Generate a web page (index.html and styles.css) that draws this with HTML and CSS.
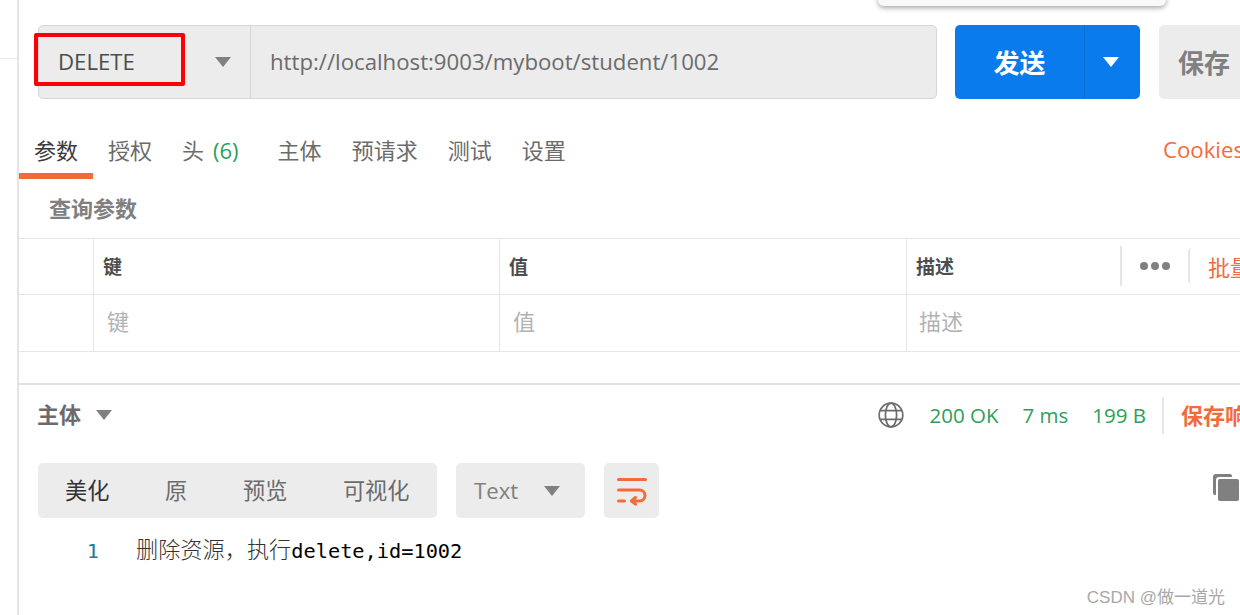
FILE: index.html
```html
<!DOCTYPE html>
<html lang="zh-CN">
<head>
<meta charset="utf-8">
<title>Postman</title>
<link rel="stylesheet" href="styles.css">
</head>
<body>
<aside class="rail"><div class="rail-line"></div></aside>
<main class="main">
  <div class="toast"></div>
  <div class="highlight"></div>
  <section class="request-bar">
    <div class="url-box">
      <div class="method"><span class="method-name">DELETE</span><span class="caret caret-grey"></span></div>
      <div class="url">http://localhost:9003/myboot/student/1002</div>
    </div>
    <div class="send">
      <span class="send-label">发送</span>
      <span class="send-more"><span class="caret caret-white"></span></span>
    </div>
    <div class="save">保存</div>
  </section>
  <nav class="tabs">
    <span class="tab tab-active">参数</span>
    <span class="tab">授权</span>
    <span class="tab tab-headers">头<span class="count">(6)</span></span>
    <span class="tab">主体</span>
    <span class="tab">预请求</span>
    <span class="tab">测试</span>
    <span class="tab">设置</span>
    <span class="spacer"></span>
    <span class="cookies">Cookies</span>
  </nav>
  <h2 class="section-title">查询参数</h2>
  <section class="table">
    <div class="row row-head">
      <div class="cell"></div>
      <div class="cell">键</div>
      <div class="cell">值</div>
      <div class="cell cell-actions">
        <span class="desc-head">描述</span>
        <span class="action-line"></span>
        <span class="dots"><i></i><i></i><i></i></span>
        <span class="bulk-line"></span>
        <span class="bulk">批量</span>
      </div>
    </div>
    <div class="row row-body">
      <div class="cell"></div>
      <div class="cell">键</div>
      <div class="cell">值</div>
      <div class="cell cell-last">描述</div>
    </div>
  </section>
  <section class="response">
    <div class="response-head">
      <span class="response-title">主体</span>
      <span class="caret caret-title"></span>
      <span class="spacer"></span>
      <svg class="globe" viewBox="0 0 26 26" fill="none" stroke="#6b6b6b" stroke-width="1.7">
        <circle cx="13" cy="13" r="11.8"/>
        <ellipse cx="13" cy="13" rx="5.6" ry="11.8"/>
        <path d="M2.6 8.6h20.8M2.6 17.4h20.8"/>
      </svg>
      <span class="stat stat-status">200 OK</span>
      <span class="stat stat-time">7 ms</span>
      <span class="stat stat-size">199 B</span>
      <span class="head-line"></span>
      <span class="save-response">保存响应</span>
    </div>
    <div class="toolbar">
      <div class="segments">
        <span class="segment seg-a seg-on">美化</span>
        <span class="segment seg-b">原</span>
        <span class="segment seg-c">预览</span>
        <span class="segment seg-d">可视化</span>
      </div>
      <div class="format"><span class="format-label">Text</span><span class="caret caret-format"></span></div>
      <div class="wrap">
        <svg viewBox="0 0 30 30" width="30" height="30" fill="none" stroke="#f26b3a" stroke-width="3" stroke-linecap="round" stroke-linejoin="round">
          <path d="M1.5 3.5h27"/>
          <path d="M1.5 14h21a5.5 5.5 0 0 1 0 11H15"/>
          <path d="M18.5 21.5 14.5 25l4 3.2"/>
          <path d="M1.5 25h6"/>
        </svg>
      </div>
      <span class="spacer"></span>
      <svg class="copy" viewBox="0 0 26 28" fill="#808080">
        <path d="M3 1h14a2 2 0 0 1 2 2v1H6a3 3 0 0 0-3 3v15H2a2 2 0 0 1-2-2V4a3 3 0 0 1 3-3z"/>
        <rect x="5" y="6" width="21" height="22" rx="2"/>
      </svg>
    </div>
    <div class="code">
      <span class="line-no">1</span>
      <span class="code-text"><span class="code-cjk">删除资源，执行</span>delete,id=1002</span>
    </div>
  </section>
  <div class="watermark">CSDN @做一道光</div>
</main>
</body>
</html>
```
FILE: styles.css
```css
* { box-sizing: border-box; }
html, body { margin: 0; height: 100%; overflow: hidden; background: #fff; }
body {
  display: flex;
  font-family: "Open Sans", "Noto Sans CJK SC", sans-serif;
  color: #6b6b6b;
}
.rail { flex: none; width: 19px; border-right: 2px solid #e4e4e4; padding-top: 58px; }
.rail-line { height: 1px; background: #e8e8e8; }
.main { position: relative; flex: 1; min-width: 0; overflow: hidden; padding-top: 25px; }
.spacer { flex: 1; }

.toast {
  position: absolute; left: 859px; top: -20px; width: 288px; height: 26px;
  background: #f9f9f9; border-radius: 6px; box-shadow: 0 2px 5px rgba(0,0,0,.35);
}
.highlight {
  position: absolute; left: 15px; top: 33px; width: 151px; height: 53px;
  border: 4px solid #fb0007; border-radius: 2px; z-index: 2;
}

.caret { flex: none; width: 0; height: 0; border-left: 8px solid transparent; border-right: 8px solid transparent; border-top: 10px solid #808080; }
.caret-white { border-top-color: #fff; }

.request-bar { display: flex; height: 74px; padding-left: 19px; }
.url-box { flex: none; display: flex; width: 899px; background: #ececec; border: 1px solid #d6d6d6; border-radius: 5px; }
.method { flex: none; display: flex; align-items: center; width: 212px; padding-left: 19px; border-right: 1px solid #d6d6d6; }
.method-name { width: 157px; margin-bottom: 1px; font-size: 22.2px; color: #4d4d4d; }
.url { display: flex; align-items: center; padding: 0 0 2px 19px; font-size: 22.2px; color: #6b6b6b; }
.send { flex: none; display: flex; width: 185px; margin-left: 18px; background: #097bed; border-radius: 5px; color: #fff; }
.send-label { display: flex; align-items: center; justify-content: center; width: 129px; font-size: 26px; font-weight: 700; }
.send-more { display: flex; align-items: center; justify-content: center; flex: 1; padding-right: 4px; border-left: 1px solid #0a6fd4; }
.save {
  flex: none; display: flex; align-items: center; width: 100px; margin-left: 19px; padding-left: 19px;
  background: #ececec; border-radius: 5px; font-size: 26px; font-weight: 700; color: #808080;
}

.tabs { display: flex; height: 80px; align-items: flex-end; }
.tab { flex: none; height: 44px; padding: 0 15px; font-size: 22px; line-height: 30px; color: #6b6b6b; }
.tab-active { color: #3b3b3b; border-bottom: 6px solid #f26b3a; }
.tab-headers { margin-right: 9px; }
.count { margin-left: 9px; color: #2ca05a; }
.cookies { flex: none; align-self: flex-end; width: 77px; height: 44px; font-size: 22.2px; line-height: 30px; color: #f26b3a; white-space: nowrap; overflow: hidden; }

.section-title { height: 59px; margin: 0; padding: 13px 0 0 30px; font-size: 22px; line-height: 32px; font-weight: 700; color: #808080; }

.table { border-top: 1px solid #e6e6e6; }
.row { display: grid; grid-template-columns: 75px 406px 407px 1fr; border-bottom: 1px solid #e6e6e6; }
.row-head { height: 56px; font-size: 19px; font-weight: 700; color: #4d4d4d; }
.row-body { height: 57px; font-size: 22px; color: #b3b3b3; }
.cell { display: flex; align-items: center; border-right: 1px solid #e6e6e6; padding: 0 0 2px 9px; }
.row-body .cell { padding: 0 0 6px 13px; }
.cell:first-child, .row-body .cell:first-child { padding: 0; }
.cell-actions, .cell-last { border-right: 0; }
.row-body .cell-last { padding-left: 12px; }
.cell-actions { min-width: 0; overflow: hidden; white-space: nowrap; }
.desc-head { width: 204px; flex: none; }
.action-line { flex: none; width: 2px; height: 40px; background: #e6e6e6; }
.dots { flex: none; display: flex; gap: 3px; margin-left: 18px; }
.dots i { width: 8px; height: 8px; border-radius: 50%; background: #808080; }
.bulk-line { flex: none; width: 4px; height: 36px; margin-left: 18px; border-left: 2px solid #e6e6e6; border-radius: 4px 0 0 4px; }
.bulk { flex: none; margin-left: 16px; font-size: 22px; font-weight: 400; color: #f26b3a; }

.response { margin-top: 31px; border-top: 2px solid #e2e2e2; }
.response-head { display: flex; align-items: center; height: 61px; padding-left: 18px; }
.response-title { margin-bottom: 6px; font-size: 22px; font-weight: 700; color: #6b6b6b; }
.caret-title { margin: 0 0 2px 15px; }
.globe { flex: none; width: 26px; height: 26px; margin-top: -2px; }
.stat { flex: none; margin-bottom: 2px; font-size: 20.5px; color: #2ca05a; }
.stat-status { margin-left: 25px; }
.stat-time { margin-left: 24px; }
.stat-size { margin-left: 24px; }
.head-line { flex: none; width: 2px; height: 37px; margin-left: 16px; background: #e6e6e6; }
.save-response { flex: none; width: 59px; margin: 0 0 4px 17px; font-size: 22px; font-weight: 700; color: #f26b3a; white-space: nowrap; overflow: hidden; }

.toolbar { display: flex; align-items: center; height: 55px; margin-top: 17px; padding-left: 19px; }
.segments { flex: none; display: flex; align-items: center; width: 399px; height: 55px; padding-bottom: 2px; background: #ececec; border-radius: 5px; font-size: 22.2px; color: #6b6b6b; }
.segment { flex: none; }
.seg-a { margin-left: 27px; }
.seg-on { color: #333; }
.seg-b { margin-left: 55.5px; }
.seg-c { margin-left: 56px; }
.seg-d { margin-left: 55.5px; }
.format { flex: none; display: flex; align-items: center; width: 129px; height: 55px; margin-left: 19px; padding-left: 18px; background: #ececec; border-radius: 5px; font-size: 22.2px; color: #808080; }
.format-label { margin-top: -1px; }
.caret-format { margin-left: 26px; }
.wrap { flex: none; display: flex; align-items: center; justify-content: center; width: 55px; height: 55px; margin-left: 19px; background: #ececec; border-radius: 5px; }
.copy { flex: none; width: 26px; height: 28px; margin: -8px 1px 0 0; }

.code { display: flex; align-items: center; height: 30px; margin-top: 18px; font-family: "DejaVu Sans Mono", "Noto Sans CJK SC", monospace; font-size: 20.3px; }
.line-no { flex: none; width: 80px; text-align: right; color: #1f7a9c; }
.code-text { margin: 0 0 6px 37px; color: #000; white-space: nowrap; }
.code-cjk { font-family: "Noto Sans CJK SC", sans-serif; font-size: 22.2px; font-weight: 300; color: #333; }

.watermark {
  position: absolute; right: 15px; top: 586px;
  font-family: "Liberation Sans", "Noto Sans CJK SC", sans-serif; font-size: 17px; line-height: 24px; color: #a8a8a8;
}
```
